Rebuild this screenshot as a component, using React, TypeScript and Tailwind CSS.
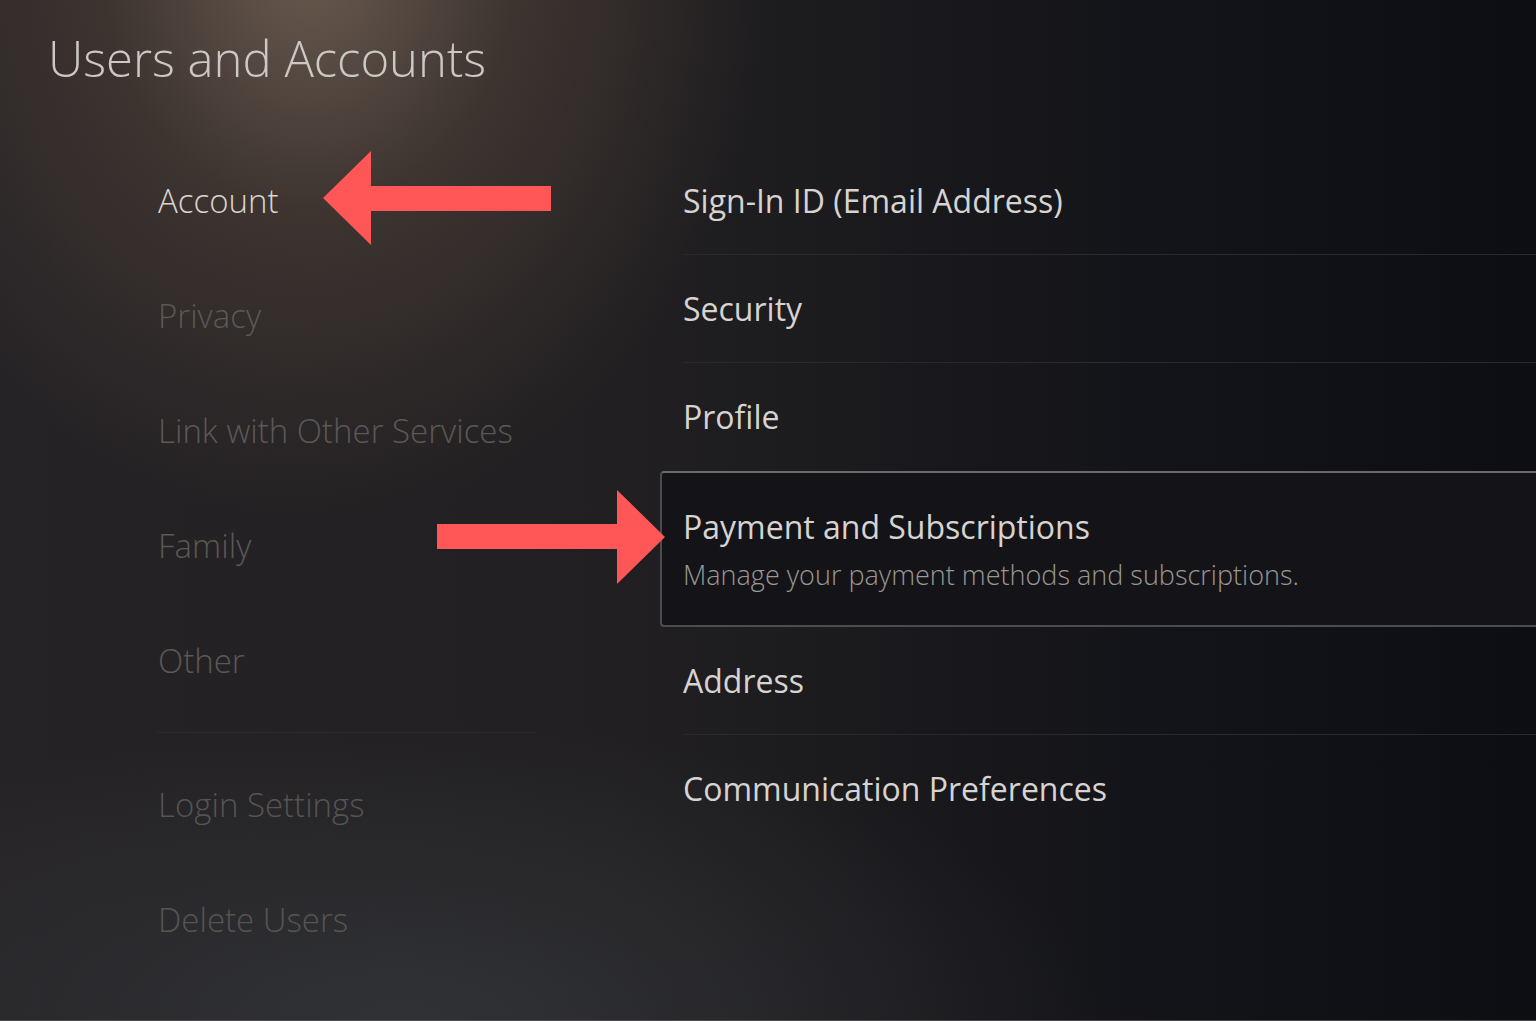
import React from "react"

const leftTop = ["Account", "Privacy", "Link with Other Services", "Family", "Other"]
const leftBottom = ["Login Settings", "Delete Users"]

function Arrow({ dir }: { dir: "left" | "right" }) {
  const points =
    dir === "left"
      ? "0,47 48,0 48,35 228,35 228,60 48,60 48,94"
      : "228,47 180,0 180,34 0,34 0,59 180,59 180,94"
  return (
    <svg width="228" height="95" viewBox="0 0 228 95">
      <polygon points={points} fill="#ff5757" />
    </svg>
  )
}

function Row({ label, divider = true }: { label: string; divider?: boolean }) {
  return (
    <div className="flex h-[108px] flex-col pl-[23px]">
      <div className="flex flex-1 items-center text-[32px] font-normal text-[#d6d3d0]">{label}</div>
      {divider && <div className="h-px bg-[#2a2a2e]" />}
    </div>
  )
}

export default function App() {
  return (
    <div
      className="relative h-[1021px] w-[1536px] overflow-hidden bg-[radial-gradient(ellipse_460px_560px_at_310px_-40px,#6a5a4f_0%,#3d3430_45%,transparent_100%),radial-gradient(ellipse_700px_300px_at_400px_1021px,#303236_0%,transparent_100%),linear-gradient(90deg,#262326_0%,#211f21_40%,#131419_75%,#0c0e14_100%)] font-['Open_Sans',sans-serif] font-light"
    >
      <h1 className="pl-[48px] pt-[26px] text-[49px] leading-[64px] font-light text-[#cbc8c5]">
        Users and Accounts
      </h1>

      <div className="mt-[53px] flex">
        {/* left menu */}
        <div className="w-[660px] pl-[158px]">
          {leftTop.map((item, i) => (
            <div
              key={item}
              className={`flex h-[115px] items-center text-[33px] ${i === 0 ? "text-[#d8d5d2]" : "text-[#5b5855]"}`}
            >
              {item}
            </div>
          ))}
          <div className="flex h-[29px] w-[377px] items-center">
            <div className="h-px w-full bg-[#2c2b2d]" />
          </div>
          {leftBottom.map((item) => (
            <div key={item} className="flex h-[115px] items-center text-[33px] text-[#565452]">
              {item}
            </div>
          ))}
        </div>

        {/* right list */}
        <div className="mt-[4px] flex-1">
          <Row label="Sign-In ID (Email Address)" />
          <Row label="Security" />
          <Row label="Profile" divider={false} />
          <div className="flex h-[156px] flex-col justify-center gap-[10px] rounded-l-[4px] border-y-2 border-l-2 border-[#4c4c50] border-t-[#6a6a6e] bg-[#141418] pl-[21px]">
            <div className="text-[32px] leading-[40px] font-normal text-[#d6d3d0]">Payment and Subscriptions</div>
            <div className="mt-[2px] text-[27px] leading-[32px] text-[#9a9794]">
              Manage your payment methods and subscriptions.
            </div>
          </div>
          <Row label="Address" />
          <Row label="Communication Preferences" divider={false} />
        </div>
      </div>

      {/* annotation arrows */}
      <div className="absolute left-[323px] top-[151px]">
        <Arrow dir="left" />
      </div>
      <div className="absolute left-[437px] top-[490px]">
        <Arrow dir="right" />
      </div>
      <div className="absolute bottom-0 left-0 h-px w-full bg-[#4a4a4c]" />
    </div>
  )
}
